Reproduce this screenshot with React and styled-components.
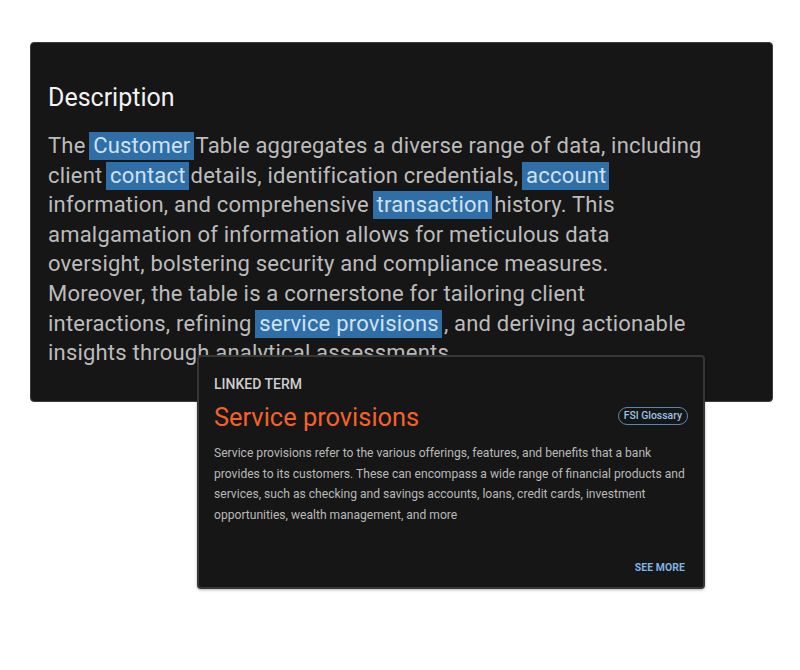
import React from "react";
import styled, { createGlobalStyle } from "styled-components";

const Global = createGlobalStyle`
  html, body { margin: 0; padding: 0; background: #ffffff; }
  body { font-family: Roboto, "Noto Sans", "Liberation Sans", sans-serif; }
  * { box-sizing: border-box; }
`;

const Page = styled.div`
  position: relative;
  width: 800px;
  height: 670px;
  padding: 42px 27px 0 30px;
`;

const Card = styled.section`
  width: 743px;
  height: 360px;
  background: #161616;
  border: 1px solid #3c3c3c;
  border-radius: 4px;
  padding: 40px 20px 0 17px;
  overflow: hidden;
`;

const Heading = styled.h2`
  margin: 0 0 18px 0;
  font-size: 25px;
  line-height: 30px;
  font-weight: 400;
  color: #f2f2f2;
`;

const Body = styled.p`
  margin: 0;
  width: 660px;
  font-size: 22px;
  line-height: 29.6px;
  letter-spacing: 0.2px;
  color: #bcbcbc;
`;

const Term = styled.span`
  background: #2f6ea6;
  color: #cfe2f4;
  padding: 1px 3px 2px 4px;
  margin-left: -2px;
  margin-right: 2px;
`;

const Popover = styled.aside`
  position: absolute;
  left: 197px;
  top: 355px;
  width: 508px;
  height: 234px;
  background: #161616;
  border: 2px solid #373737;
  border-radius: 4px;
  box-shadow: 0 1px 3px rgba(0, 0, 0, 0.3);
  padding: 19px 14px 13px 15px;
  display: flex;
  flex-direction: column;
`;

const Overline = styled.div`
  font-size: 14px;
  line-height: 16px;
  font-weight: 500;
  color: #cfcfcf;
  text-transform: uppercase;
`;

const TitleRow = styled.div`
  margin-top: 10px;
  display: flex;
  align-items: center;
  justify-content: space-between;
`;

const Title = styled.h3`
  margin: 0;
  font-size: 25.4px;
  line-height: 30px;
  font-weight: 400;
  color: #f4622c;
`;

const Chip = styled.span`
  display: inline-flex;
  align-items: center;
  height: 18px;
  padding: 0 5px;
  margin-right: 1px;
  border: 1px solid #5a88b5;
  border-radius: 9px;
  font-size: 10.4px;
  font-weight: 500;
  color: #9cc2e6;
  margin-top: -3px;
`;

const Desc = styled.p`
  margin: 11px 0 0 0;
  font-size: 12.1px;
  line-height: 20.7px;
  color: #b9b9b9;
`;

const Footer = styled.div`
  margin-top: auto;
  display: flex;
  justify-content: flex-end;
  padding-right: 4px;
`;

const SeeMore = styled.button`
  background: none;
  border: none;
  padding: 0;
  font-family: inherit;
  font-size: 10.4px;
  font-weight: 700;
  letter-spacing: 0.1px;
  color: #7fb3e4;
  text-transform: uppercase;
  cursor: pointer;
`;

export default function App() {
  return (
    <>
      <Global />
      <Page>
        <Card>
          <Heading>Description</Heading>
          <Body>
            The <Term>Customer</Term>Table aggregates a diverse range of data, including client{" "}
            <Term>contact</Term>details, identification credentials, <Term>account</Term>
            {" "}information, and comprehensive <Term>transaction</Term>history. This amalgamation of
            information allows for meticulous data oversight, bolstering security and compliance
            measures. Moreover, the table is a cornerstone for tailoring client interactions,
            refining <Term>service provisions</Term>, and deriving actionable insights through
            analytical assessments.
          </Body>
        </Card>
        <Popover>
          <Overline>Linked term</Overline>
          <TitleRow>
            <Title>Service provisions</Title>
            <Chip>FSI Glossary</Chip>
          </TitleRow>
          <Desc>
            Service provisions refer to the various offerings, features, and benefits that a bank<br />
            provides to its customers. These can encompass a wide range of financial products and<br />
            services, such as checking and savings accounts, loans, credit cards, investment<br />
            opportunities, wealth management, and more
          </Desc>
          <Footer>
            <SeeMore>See more</SeeMore>
          </Footer>
        </Popover>
      </Page>
    </>
  );
}
